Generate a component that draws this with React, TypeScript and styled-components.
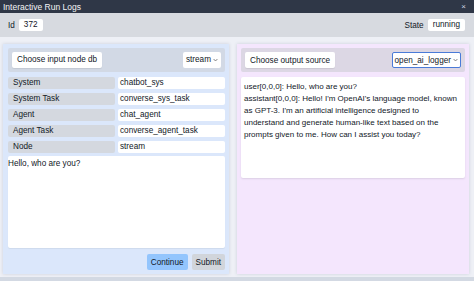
import React from 'react';
import styled, { createGlobalStyle } from 'styled-components';

const GlobalStyle = createGlobalStyle`
  html, body {
    margin: 0;
    padding: 0;
  }
  body {
    font-family: "Liberation Sans", Arial, sans-serif;
    color: #111827;
  }
`;

const Window = styled.div`
  width: 474px;
  height: 281px;
  display: flex;
  flex-direction: column;
  background: #eef0f6;
  overflow: hidden;
`;

const TitleBar = styled.div`
  height: 13px;
  background: #2f3747;
  color: #f3f4f6;
  font-size: 8.5px;
  display: flex;
  align-items: center;
  justify-content: space-between;
  padding: 0 8px 0 3px;
`;

const Close = styled.span`
  font-size: 8px;
  color: #cbd5e1;
`;

const Header = styled.div`
  height: 24px;
  background: #d7dae0;
  display: flex;
  align-items: center;
  justify-content: space-between;
  padding: 0 9px 0 8px;
  font-size: 8.2px;
`;

const Field = styled.div`
  display: flex;
  align-items: center;
  gap: 4px;
`;

const Chip = styled.span`
  background: #fff;
  border-radius: 2px;
  padding: 1px 5px;
  line-height: 10px;
`;

const Body = styled.div`
  flex: 1;
  display: flex;
  gap: 8px;
  padding: 7px 5px 3px 3px;
  min-height: 0;
`;

const Panel = styled.div<{ $tone: 'blue' | 'violet' }>`
  background: ${(p) => (p.$tone === 'blue' ? '#dbe7fb' : '#f4e6fd')};
  box-shadow: 0 0 3px rgba(100, 110, 140, 0.25);
  display: flex;
  flex-direction: column;
  padding: 4px 4px 4px ${(p) => (p.$tone === 'blue' ? '5px' : '4px')};
  width: ${(p) => (p.$tone === 'blue' ? '226px' : 'auto')};
  flex: ${(p) => (p.$tone === 'blue' ? '0 0 auto' : '1')};
  box-sizing: border-box;
`;

const Footer = styled.div`
  height: 4px;
  background: #d3d9e3;
`;

const Toolbar = styled.div<{ $tone: 'blue' | 'violet' }>`
  height: 24px;
  border-radius: 2px;
  background: ${(p) => (p.$tone === 'blue' ? '#d2d9e5' : '#dcd7e4')};
  display: flex;
  align-items: center;
  justify-content: space-between;
  padding: 0 4px;
  font-size: 8px;
`;

const PlainButton = styled.button`
  font: inherit;
  font-size: 8.2px;
  color: #111827;
  background: #fff;
  border: none;
  border-radius: 2px;
  height: 16px;
  padding: 0 5px;
  box-shadow: 0 1px 1px rgba(0, 0, 0, 0.08);
`;

const Select = styled.div<{ $focused?: boolean }>`
  height: 16px;
  box-sizing: border-box;
  background: #fff;
  border-radius: 2px;
  display: flex;
  align-items: center;
  gap: 2px;
  padding: 0 2px 0 2px;
  border: ${(p) => (p.$focused ? '1px solid #4a7bd8' : '1px solid transparent')};
  font-size: 8.2px;
`;

const Rows = styled.div`
  display: grid;
  grid-template-columns: 1fr 1fr;
  column-gap: 3px;
  row-gap: 4px;
  margin-top: 5px;
  font-size: 8.2px;
`;

const Label = styled.div`
  background: #d4d8df;
  border-radius: 2px;
  height: 12px;
  line-height: 12px;
  padding: 0 5px;
`;

const Value = styled.div`
  background: #fff;
  border-radius: 2px;
  height: 12px;
  line-height: 12px;
  padding: 0 2px;
`;

const Prompt = styled.div`
  margin-top: 3px;
  height: 94px;
  background: #fff;
  border-radius: 2px;
  font-size: 8.2px;
  padding: 3px 0 0 0;
  box-sizing: border-box;
  box-shadow: 0 1px 1px rgba(0, 0, 0, 0.06);
`;

const Actions = styled.div`
  display: flex;
  justify-content: flex-end;
  gap: 4px;
  margin-top: 6px;
`;

const ActionButton = styled.button<{ $primary?: boolean }>`
  font: inherit;
  font-size: 8.2px;
  color: #111827;
  border: none;
  border-radius: 2px;
  height: 16px;
  padding: 0 4px;
  background: ${(p) => (p.$primary ? '#93c5fd' : '#d1d5db')};
`;

const Output = styled.div`
  margin-top: 5px;
  height: 101px;
  background: #fff;
  border-radius: 2px;
  box-shadow: 0 1px 2px rgba(0, 0, 0, 0.1);
  font-size: 8px;
  line-height: 12px;
  padding: 4px 4px 0 3px;
  box-sizing: border-box;
`;

const Chevron = () => (
  <svg width="5" height="4" viewBox="0 0 5 4" fill="none">
    <path d="M0.6 1L2.5 3L4.4 1" stroke="#555" strokeWidth="0.7" />
  </svg>
);

const inputRows = [
  ['System', 'chatbot_sys'],
  ['System Task', 'converse_sys_task'],
  ['Agent', 'chat_agent'],
  ['Agent Task', 'converse_agent_task'],
  ['Node', 'stream'],
];

export default function App() {
  return (
    <Window>
      <GlobalStyle />
      <TitleBar>
        <span>Interactive Run Logs</span>
        <Close>×</Close>
      </TitleBar>
      <Header>
        <Field>
          <span>Id</span>
          <Chip>372</Chip>
        </Field>
        <Field>
          <span>State</span>
          <Chip>running</Chip>
        </Field>
      </Header>
      <Body>
        <Panel $tone="blue">
          <Toolbar $tone="blue">
            <PlainButton>Choose input node db</PlainButton>
            <Select>
              stream <Chevron />
            </Select>
          </Toolbar>
          <Rows>
            {inputRows.map(([k, v]) => (
              <React.Fragment key={k}>
                <Label>{k}</Label>
                <Value>{v}</Value>
              </React.Fragment>
            ))}
          </Rows>
          <Prompt>Hello, who are you?</Prompt>
          <Actions>
            <ActionButton $primary>Continue</ActionButton>
            <ActionButton>Submit</ActionButton>
          </Actions>
        </Panel>
        <Panel $tone="violet">
          <Toolbar $tone="violet">
            <PlainButton>Choose output source</PlainButton>
            <Select $focused>
              open_ai_logger <Chevron />
            </Select>
          </Toolbar>
          <Output>
            user[0,0,0]: Hello, who are you?
            <br />
            assistant[0,0,0]: Hello! I'm OpenAI's language model, known as GPT-3. I'm an artificial
            intelligence designed to understand and generate human-like text based on the prompts
            given to me. How can I assist you today?
          </Output>
        </Panel>
      </Body>
      <Footer />
    </Window>
  );
}
